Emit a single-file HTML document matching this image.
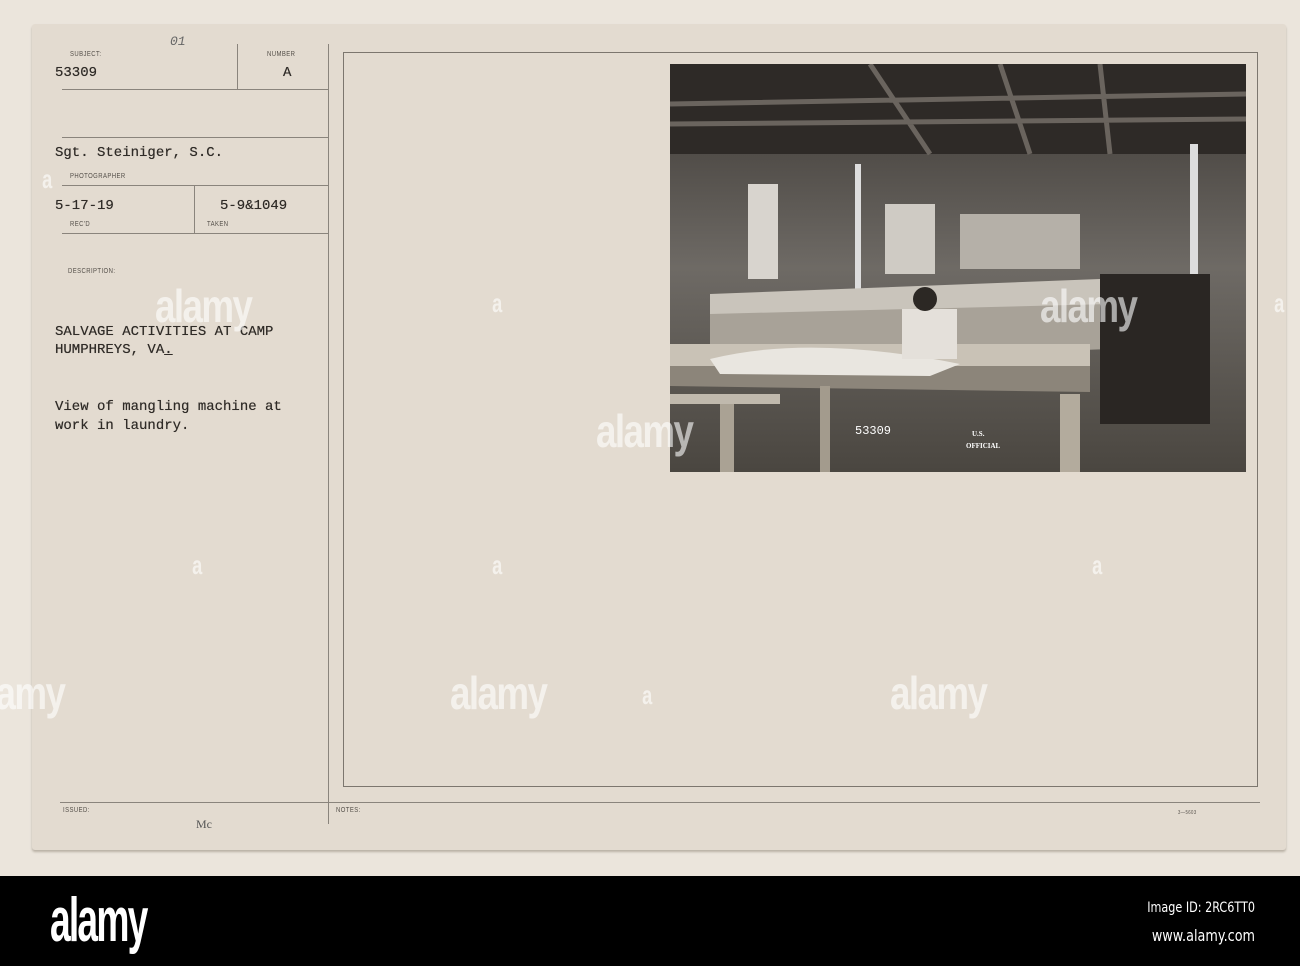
<!DOCTYPE html>
<html><head><style>
body{margin:0;width:1300px;height:966px;background:#ebe5dc;position:relative;overflow:hidden;font-family:"Liberation Mono",monospace;color:#3c3834}
.a{position:absolute}
.card{left:32px;top:24px;width:1254px;height:826px;background:#e3dbd0;border-radius:3px;box-shadow:0 2px 2px #b9b1a5}
.l{position:absolute;background:#8a847c}
.sm{position:absolute;font-family:"Liberation Sans",sans-serif;font-size:7px;color:#55504a;letter-spacing:.5px;transform:scaleX(.85);transform-origin:left}
.t{position:absolute;font-size:14px;color:#2f2b27;white-space:pre;text-shadow:0 0 .4px #2f2b27}
.bar{left:0;top:876px;width:1300px;height:90px;background:#000}
.w{position:absolute;font-family:"Liberation Sans",sans-serif;font-weight:bold;font-size:46px;color:rgba(255,255,255,.6);letter-spacing:-2px;transform:scaleX(.8);transform-origin:left;line-height:1}
.wa{position:absolute;font-family:"Liberation Sans",sans-serif;font-weight:bold;font-size:26px;color:rgba(255,255,255,.6);transform:scaleX(.7);line-height:1}
</style></head><body>
<div class="a card"></div>
<div class="l" style="left:62px;top:89px;width:266px;height:1px"></div>
<div class="l" style="left:237px;top:44px;width:1px;height:45px"></div>
<div class="l" style="left:62px;top:137px;width:266px;height:1px"></div>
<div class="l" style="left:62px;top:185px;width:266px;height:1px"></div>
<div class="l" style="left:194px;top:186px;width:1px;height:47px"></div>
<div class="l" style="left:62px;top:233px;width:266px;height:1px"></div>
<div class="l" style="left:328px;top:44px;width:1px;height:780px"></div>
<div class="l" style="left:60px;top:802px;width:1200px;height:1px"></div>
<div class="a" style="left:343px;top:52px;width:913px;height:733px;border:1px solid #7c766e"></div>
<div class="sm" style="left:70px;top:51px">SUBJECT:</div>
<div class="a" style="left:170px;top:34px;font-style:italic;font-size:13px;color:#666">01</div>
<div class="sm" style="left:267px;top:51px">NUMBER</div>
<div class="t" style="left:55px;top:65px">53309</div>
<div class="t" style="left:283px;top:65px">A</div>
<div class="t" style="left:55px;top:145px">Sgt. Steiniger, S.C.</div>
<div class="sm" style="left:70px;top:173px">PHOTOGRAPHER</div>
<div class="t" style="left:55px;top:198px">5-17-19</div>
<div class="t" style="left:220px;top:198px">5-9&amp;1049</div>
<div class="sm" style="left:70px;top:221px">REC'D</div>
<div class="sm" style="left:207px;top:221px">TAKEN</div>
<div class="sm" style="left:68px;top:268px">DESCRIPTION:</div>
<div class="t" style="left:55px;top:323px;line-height:18px">SALVAGE ACTIVITIES AT CAMP
HUMPHREYS, VA<u>.</u></div>
<div class="t" style="left:55px;top:398px;line-height:19px">View of mangling machine at
work in laundry.</div>
<div class="sm" style="left:63px;top:807px">ISSUED:</div>
<div class="a" style="left:196px;top:817px;font-size:12px;color:#555;font-family:'Liberation Serif',serif">Mc</div>
<div class="sm" style="left:336px;top:807px">NOTES:</div>
<div class="sm" style="left:1178px;top:810px;font-size:5px">3—5603</div>
<svg class="a" style="left:670px;top:64px" width="576" height="408" viewBox="0 0 576 408">
<defs><linearGradient id="g" x1="0" y1="0" x2="0" y2="1"><stop offset="0" stop-color="#3a3632"/><stop offset=".5" stop-color="#6e6a65"/><stop offset="1" stop-color="#4a4640"/></linearGradient></defs>
<rect width="576" height="408" fill="url(#g)"/>
<rect x="0" y="0" width="576" height="90" fill="#2e2a27"/>
<path d="M0 40 L576 30 M0 60 L576 55 M200 0 L260 90 M330 0 L360 90 M430 0 L440 90" stroke="#6a645e" stroke-width="5"/>
<rect x="78" y="120" width="30" height="95" fill="#d8d4ce"/>
<rect x="215" y="140" width="50" height="70" fill="#cfcbc4"/>
<rect x="290" y="150" width="120" height="55" fill="#b5b0a8"/>
<rect x="185" y="100" width="6" height="200" fill="#ddd"/>
<rect x="520" y="80" width="8" height="210" fill="#ddd"/>
<path d="M40 230 L430 215 L440 270 L40 290Z" fill="#c9c4bb"/>
<path d="M40 250 L440 240 L440 285 L40 300Z" fill="#a8a298"/>
<rect x="0" y="280" width="420" height="22" fill="#c9c2b6"/>
<path d="M0 302 L420 302 L420 328 L0 322Z" fill="#8c857a"/>
<path d="M40 295 Q140 270 290 300 L260 312 L50 310Z" fill="#e9e6e0"/>
<rect x="232" y="245" width="55" height="50" fill="#e4e0da"/>
<circle cx="255" cy="235" r="12" fill="#2c2824"/>
<rect x="430" y="210" width="110" height="150" fill="#2a2623"/>
<rect x="0" y="330" width="110" height="10" fill="#c0b9ad"/>
<rect x="50" y="340" width="14" height="68" fill="#aaa294"/>
<rect x="390" y="330" width="20" height="78" fill="#b3ab9d"/>
<rect x="150" y="322" width="10" height="86" fill="#a39b8d"/>
<text x="185" y="370" font-family="Liberation Mono" font-size="12" fill="#fff">53309</text>
<text x="302" y="372" font-family="Liberation Serif" font-size="7" fill="#fff" font-weight="bold">U.S.</text>
<text x="296" y="384" font-family="Liberation Serif" font-size="7" fill="#fff" font-weight="bold">OFFICIAL</text>
</svg>
<div class="w" style="left:155px;top:283px">alamy</div>
<div class="w" style="left:596px;top:408px">alamy</div>
<div class="w" style="left:1040px;top:283px">alamy</div>
<div class="w" style="left:-32px;top:670px">alamy</div>
<div class="w" style="left:450px;top:670px">alamy</div>
<div class="w" style="left:890px;top:670px">alamy</div>
<div class="wa" style="left:190px;top:552px">a</div>
<div class="wa" style="left:490px;top:552px">a</div>
<div class="wa" style="left:490px;top:290px">a</div>
<div class="wa" style="left:1090px;top:552px">a</div>
<div class="wa" style="left:40px;top:166px">a</div>
<div class="wa" style="left:640px;top:682px">a</div>
<div class="wa" style="left:1272px;top:290px">a</div>
<div class="a bar"></div>
<div class="a" style="left:50px;top:885px;font-family:'Liberation Sans',sans-serif;font-weight:bold;font-size:62px;color:#fff;letter-spacing:-3px;transform:scaleX(.6);transform-origin:left">alamy</div>
<div class="a" style="left:1100px;top:900px;width:155px;text-align:right;font-family:'DejaVu Sans',sans-serif;font-size:14px;color:#fff;transform:scaleX(.8);transform-origin:right">Image ID: 2RC6TT0</div>
<div class="a" style="left:1080px;top:926px;width:175px;text-align:right;font-family:'DejaVu Sans',sans-serif;font-size:16px;color:#fff;transform:scaleX(.8);transform-origin:right">www.alamy.com</div>
</body></html>
